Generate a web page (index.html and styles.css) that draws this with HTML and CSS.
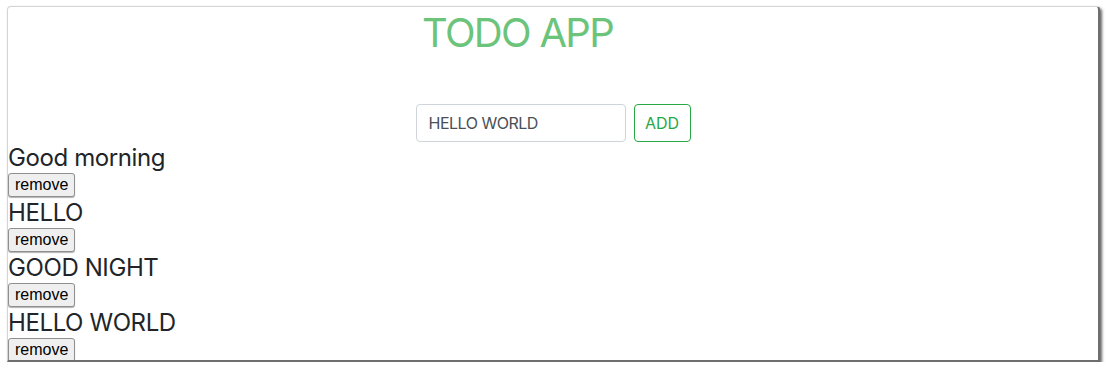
FILE: index.html
```html
<!DOCTYPE html>
<html>
<head>
<meta charset="utf-8">
<link rel="stylesheet" href="styles.css">
</head>
<body>
<div class="window">
  <h1 class="title">TODO APP</h1>
  <div class="form">
    <input class="field" type="text" value="HELLO WORLD">
    <button class="add">ADD</button>
  </div>
  <ul class="list">
    <li class="item"><div class="text">Good morning</div><button class="remove">remove</button></li>
    <li class="item"><div class="text">HELLO</div><button class="remove">remove</button></li>
    <li class="item"><div class="text">GOOD NIGHT</div><button class="remove">remove</button></li>
    <li class="item"><div class="text">HELLO WORLD</div><button class="remove">remove</button></li>
  </ul>
</div>
</body>
</html>
```
FILE: styles.css
```css
html, body {
  margin: 0;
  padding: 0;
  background: #fff;
}
body {
  padding: 6px 0 0 7px;
  font-family: Inter, "Noto Sans", sans-serif;
  color: #212529;
}
.window {
  width: 1093px;
  height: 356px;
  box-sizing: border-box;
  border: 1px solid #d4d4d4;
  border-right: 2px solid #6e6e6e;
  border-bottom: 2px solid #6e6e6e;
  border-radius: 4px 4px 0 0;
  box-shadow: 2px 2px 3px rgba(0,0,0,0.6);
  background: #fff;
  overflow: hidden;
}
.title {
  margin: 2px 0 0 0;
  padding-left: 414px;
  font-size: 40px;
  font-weight: 400;
  line-height: 48px;
  letter-spacing: -1.7px;
  color: #6cc47b;
}
.form {
  display: flex;
  justify-content: center;
  gap: 8px;
  margin-top: 47px;
}
.field {
  width: 210px;
  height: 38px;
  box-sizing: border-box;
  border: 1px solid #ced4da;
  border-radius: 4px;
  padding: 0 12px;
  font-family: inherit;
  font-size: 16px;
  letter-spacing: -0.5px;
  color: #495057;
}
.add {
  width: 57px;
  height: 38px;
  box-sizing: border-box;
  border: 1px solid #28a745;
  border-radius: 4px;
  background: #fff;
  color: #28a745;
  font-family: inherit;
  font-size: 16px;
}
.list {
  list-style: none;
  margin: 0;
  padding: 0;
}
.item {
  display: flex;
  flex-direction: column;
  align-items: flex-start;
}
.text {
  font-size: 24px;
  line-height: 31px;
  letter-spacing: -0.4px;
}
.remove {
  font-family: "Liberation Sans", Arial, sans-serif;
  font-size: 16px;
  height: 24px;
  padding: 0 6px;
  background: #efefef;
  border: 1px solid #8f8f8f;
  border-radius: 3px;
  box-shadow: 0 1px 1px rgba(0,0,0,0.3);
  color: #000;
}
```
